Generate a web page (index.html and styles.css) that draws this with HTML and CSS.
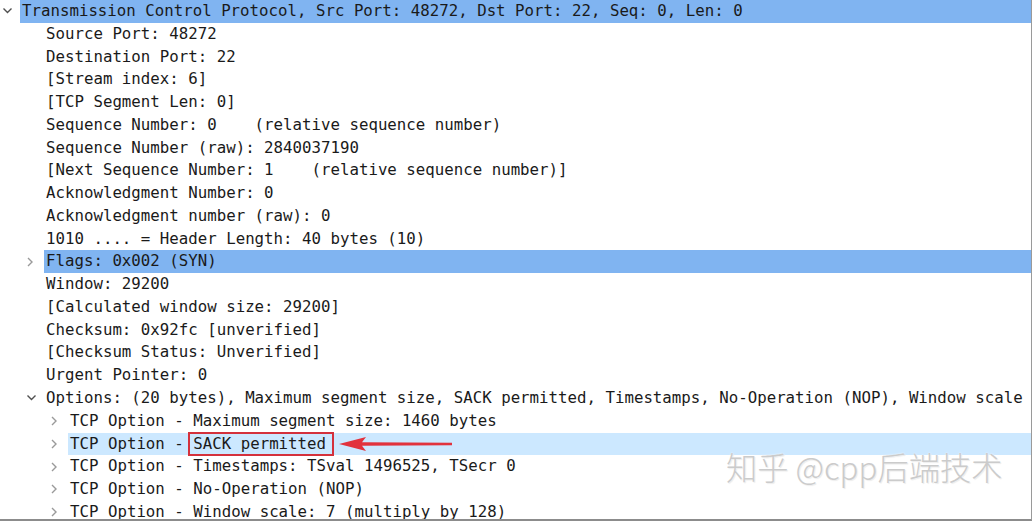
FILE: index.html
```html
<!DOCTYPE html>
<html lang="en">
<head>
  <meta charset="UTF-8" />
  <title>Packet Details</title>
  <link rel="stylesheet" href="styles.css">
</head>
<body>
  <div class="pane">
    <div class="row lv0 open"><span class="tog"><svg width="18" height="22"><polyline points="1.5,8.5 5.5,12.5 9.5,8.5" /></svg></span><span class="label sel">Transmission Control Protocol, Src Port: 48272, Dst Port: 22, Seq: 0, Len: 0</span></div>
    <div class="row lv1"><span class="tog"></span><span class="label">Source Port: 48272</span></div>
    <div class="row lv1"><span class="tog"></span><span class="label">Destination Port: 22</span></div>
    <div class="row lv1"><span class="tog"></span><span class="label">[Stream index: 6]</span></div>
    <div class="row lv1"><span class="tog"></span><span class="label">[TCP Segment Len: 0]</span></div>
    <div class="row lv1"><span class="tog"></span><span class="label">Sequence Number: 0    (relative sequence number)</span></div>
    <div class="row lv1"><span class="tog"></span><span class="label">Sequence Number (raw): 2840037190</span></div>
    <div class="row lv1"><span class="tog"></span><span class="label">[Next Sequence Number: 1    (relative sequence number)]</span></div>
    <div class="row lv1"><span class="tog"></span><span class="label">Acknowledgment Number: 0</span></div>
    <div class="row lv1"><span class="tog"></span><span class="label">Acknowledgment number (raw): 0</span></div>
    <div class="row lv1"><span class="tog"></span><span class="label">1010 .... = Header Length: 40 bytes (10)</span></div>
    <div class="row lv1 closed"><span class="tog"><svg width="18" height="22"><polyline points="2,7 6,11 2,15" /></svg></span><span class="label sel">Flags: 0x002 (SYN)</span></div>
    <div class="row lv1"><span class="tog"></span><span class="label">Window: 29200</span></div>
    <div class="row lv1"><span class="tog"></span><span class="label">[Calculated window size: 29200]</span></div>
    <div class="row lv1"><span class="tog"></span><span class="label">Checksum: 0x92fc [unverified]</span></div>
    <div class="row lv1"><span class="tog"></span><span class="label">[Checksum Status: Unverified]</span></div>
    <div class="row lv1"><span class="tog"></span><span class="label">Urgent Pointer: 0</span></div>
    <div class="row lv1 open"><span class="tog"><svg width="18" height="22"><polyline points="1.5,8.5 5.5,12.5 9.5,8.5" /></svg></span><span class="label">Options: (20 bytes), Maximum segment size, SACK permitted, Timestamps, No-Operation (NOP), Window scale</span></div>
    <div class="row lv2 closed"><span class="tog"><svg width="18" height="22"><polyline points="2,7 6,11 2,15" /></svg></span><span class="label">TCP Option - Maximum segment size: 1460 bytes</span></div>
    <div class="row lv2 closed"><span class="tog"><svg width="18" height="22"><polyline points="2,7 6,11 2,15" /></svg></span><span class="label hover">TCP Option - <span class="mark">SACK permitted</span><svg class="pointer" width="113" height="16" viewBox="0 0 113 16"><polygon points="0,8 27,1 23,6.2 113,6.8 113,9.2 23,9.8 27,15" /></svg></span></div>
    <div class="row lv2 closed"><span class="tog"><svg width="18" height="22"><polyline points="2,7 6,11 2,15" /></svg></span><span class="label">TCP Option - Timestamps: TSval 1496525, TSecr 0</span></div>
    <div class="row lv2 closed"><span class="tog"><svg width="18" height="22"><polyline points="2,7 6,11 2,15" /></svg></span><span class="label">TCP Option - No-Operation (NOP)</span></div>
    <div class="row lv2 closed"><span class="tog"><svg width="18" height="22"><polyline points="2,7 6,11 2,15" /></svg></span><span class="label">TCP Option - Window scale: 7 (multiply by 128)</span></div>
    <div class="watermark">知乎 @cpp后端技术</div>
  </div>
</body>
</html>
```

FILE: styles.css
```css
body {
  margin: 0;
  background: #fff;
}
.pane {
  position: relative;
  width: 1031px;
  height: 519px;
  overflow: hidden;
  border-right: 1px solid #9a9a9a;
  border-bottom: 2px solid #8c8c8c;
  font-family: "DejaVu Sans Mono", "Liberation Mono", monospace;
  font-size: 15.76px;
  color: #1a1a1a;
}
.row {
  display: flex;
  align-items: center;
  height: 22.77px;
  line-height: 22.77px;
  white-space: pre;
}
.lv0 { padding-left: 2px; }
.lv1 { padding-left: 26px; }
.lv2 { padding-left: 50px; }
.tog {
  width: 18px;
  height: 22px;
  flex: none;
}
.tog svg polyline {
  fill: none;
  stroke-width: 1.4;
}
.open .tog svg polyline { stroke: #505050; }
.closed .tog svg polyline { stroke: #9a9a9a; }
.label {
  flex: 1;
  padding-left: 2px;
  height: 22.77px;
  display: flex;
  align-items: center;
}
.sel { background: #80b4f1; }
.hover { background: #cce8ff; }
.mark {
  display: inline-block;
  line-height: 20px;
  border: 2px solid #d4313c;
  margin-left: -5px;
  padding: 0 6px 0 3px;
}
.pointer {
  margin-left: 5px;
  fill: #e2323d;
}
.watermark {
  position: absolute;
  left: 726px;
  top: 444px;
  font-family: "Noto Sans CJK SC", sans-serif;
  font-weight: 300;
  font-size: 31.3px;
  color: #cbcbcb;
  text-shadow: 0 0 2px #fff, 1px 1px 1px #e8e8e8;
  white-space: pre;
}
```
